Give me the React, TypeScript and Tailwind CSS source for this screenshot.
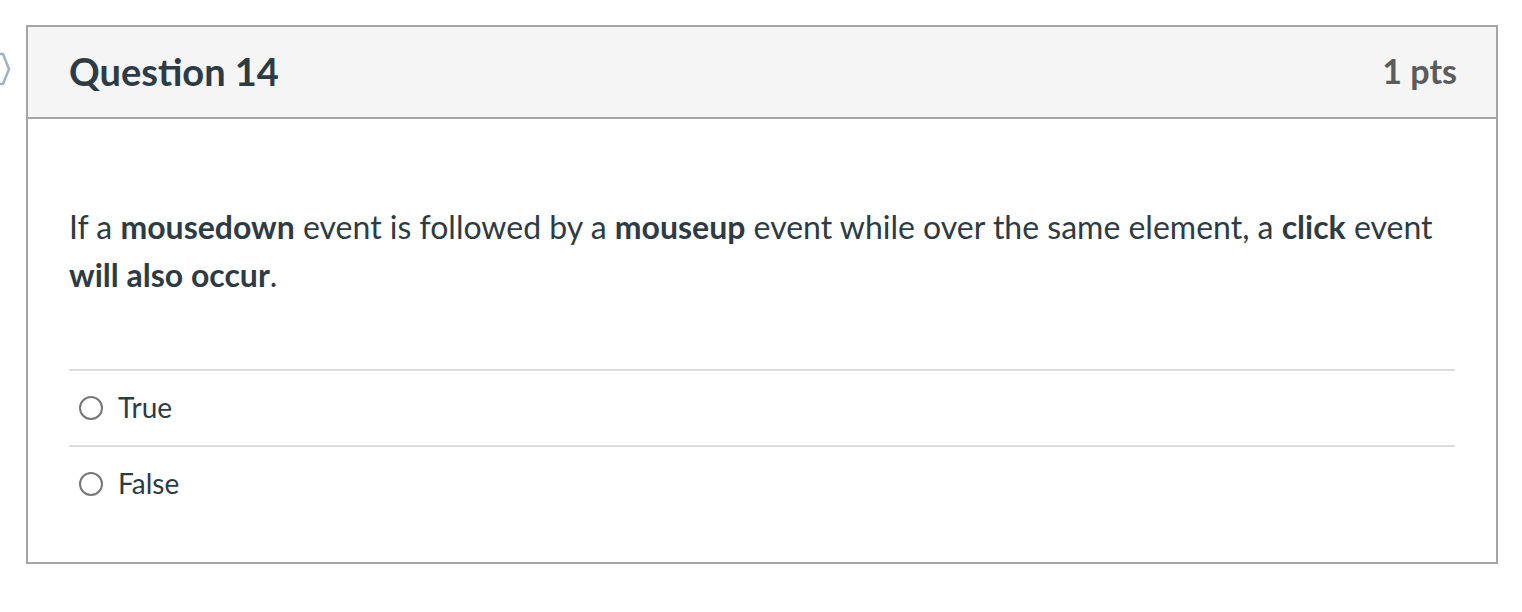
import React from "react";

export default function App() {
  return (
    <div className="relative w-[1522px] h-[612px] bg-white" style={{ fontFamily: "Lato, 'Open Sans', sans-serif" }}>
      <svg className="absolute left-0 top-[52px]" width="12" height="34" viewBox="0 0 12 34">
        <path d="M-4 2 L3 2 L9 17 L3 32 L-4 32" fill="none" stroke="#9db3c8" strokeWidth="2.5" strokeLinejoin="round" />
      </svg>
      <div className="pt-[25px] pl-[26px] w-[1498px]">
        <div className="border-2 border-[#a5a5a5]">
          <div className="h-[92px] bg-[#f5f5f5] border-b-2 border-[#a5a5a5] flex items-center justify-between pl-[41px] pr-[39px]">
            <div className="text-[38px] font-bold text-[#2d3b45] leading-none pb-[2px]">Question 14</div>
            <div className="text-[34px] font-bold text-[#5b5b5b] leading-none pb-[2px]">1 pts</div>
          </div>
          <div className="px-[41px] pt-[84px] pb-[41px]">
            <div className="text-[32px] leading-[48px] text-[#2d3b45]">
              If a <b>mousedown</b> event is followed by a <b>mouseup</b> event while over the same element, a <b>click</b> event <b>will also occur</b>.
            </div>
            <div className="mt-[70px] border-t-2 border-[#dddddd]">
              <div className="h-[76px] flex items-center gap-[15px] pl-[10px] border-b-2 border-[#dddddd]">
                <span className="w-[24px] h-[24px] rounded-full border-2 border-[#777777] bg-white" />
                <span className="text-[28px] leading-none pb-[3px] text-[#2d3b45]">True</span>
              </div>
              <div className="h-[74px] flex items-center gap-[15px] pl-[10px]">
                <span className="w-[24px] h-[24px] rounded-full border-2 border-[#777777] bg-white" />
                <span className="text-[28px] leading-none pb-[3px] text-[#2d3b45]">False</span>
              </div>
            </div>
          </div>
        </div>
      </div>
    </div>
  );
}
